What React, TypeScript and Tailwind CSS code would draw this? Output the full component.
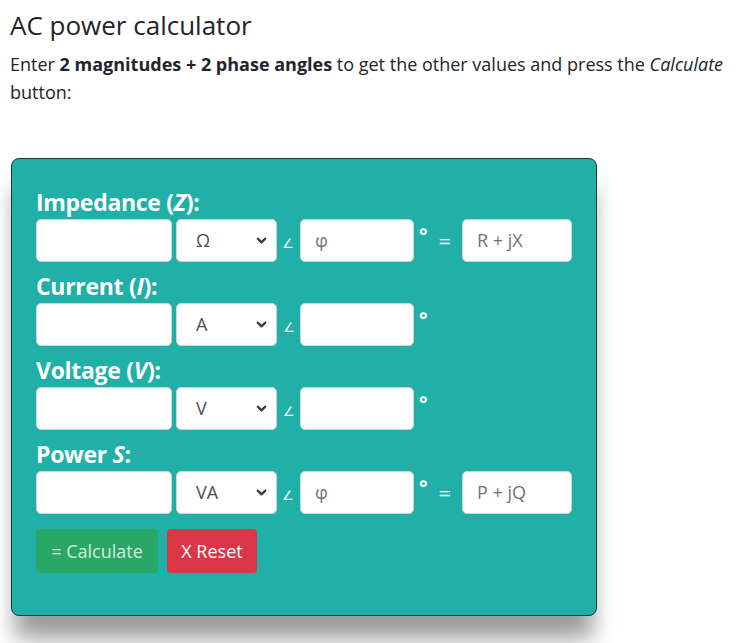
import { ChevronDown } from 'lucide-react';

const font = { fontFamily: '"Open Sans", "Noto Sans", sans-serif' };

type Row = {
  label: React.ReactNode;
  unit: string;
  phase?: string;
  result?: string;
};

const rows: Row[] = [
  { label: <>Impedance (<i>Z</i>):</>, unit: 'Ω', phase: 'φ', result: 'R + jX' },
  { label: <>Current (<i>I</i>):</>, unit: 'A' },
  { label: <>Voltage (<i>V</i>):</>, unit: 'V' },
  { label: <>Power <i>S</i>:</>, unit: 'VA', phase: 'φ', result: 'P + jQ' },
];

function Field({ row }: { row: Row }) {
  return (
    <div>
      <div className="text-[23px] font-bold leading-[28px] text-white tracking-[-0.3px]">{row.label}</div>
      <div className="mt-[3px] flex items-center h-[43px]">
        <div className="w-[136px] h-full bg-white rounded-[5px] border border-[#ced4da]" />
        <div className="ml-[4px] w-[101px] h-full bg-white rounded-[5px] border border-[#ced4da] flex items-center pl-[19px] pr-[7px] text-[18px] text-[#495057]">
          <span className="flex-1">{row.unit}</span>
          <ChevronDown size={15} strokeWidth={3.4} className="text-[#343a40]" />
        </div>
        <span className="w-[23px] text-center text-white text-[13px] mt-[6px]">∠</span>
        <div className="w-[114px] h-full bg-white rounded-[5px] border border-[#ced4da] flex items-center pl-[14px] text-[18px] text-[#6c757d]">
          {row.phase}
        </div>
        <span className="ml-[5px] text-white text-[20px] font-bold self-start mt-[2px]">°</span>
        {row.result && (
          <>
            <span className="ml-[11px] text-white text-[22px]">=</span>
            <div className="ml-[11px] w-[110px] h-full bg-white rounded-[5px] border border-[#ced4da] flex items-center pl-[14px] text-[18px] text-[#6c757d]">
              {row.result}
            </div>
          </>
        )}
      </div>
    </div>
  );
}

export default function App() {
  return (
    <div className="min-h-screen bg-white text-[#212529] px-[10px] pt-[6px]" style={font}>
      <h1 className="text-[26px] leading-[38px] font-normal">AC power calculator</h1>
      <p className="mt-[6px] text-[18px] leading-[28px]">
        Enter <b>2 magnitudes + 2 phase angles</b> to get the other values and press the <i>Calculate</i> button:
      </p>
      <div className="mt-[52px] ml-[1px] w-[586px] h-[458px] bg-[#20b0a8] border border-[#1a3a38] rounded-[8px] pt-[29px] px-[24px] shadow-[0_26px_22px_-4px_rgba(0,0,0,0.4)]">
        <div className="flex flex-col gap-[10px]">
          {rows.map((r, i) => (
            <Field key={i} row={r} />
          ))}
        </div>
        <div className="mt-[15px] flex gap-[9px]">
          <button className="h-[44px] w-[122px] rounded-[4px] bg-[#28a766] text-[18px] text-[#d4eedd]">= Calculate</button>
          <button className="h-[44px] w-[90px] rounded-[4px] bg-[#dc3545] text-[18px] text-white">X Reset</button>
        </div>
      </div>
    </div>
  );
}
